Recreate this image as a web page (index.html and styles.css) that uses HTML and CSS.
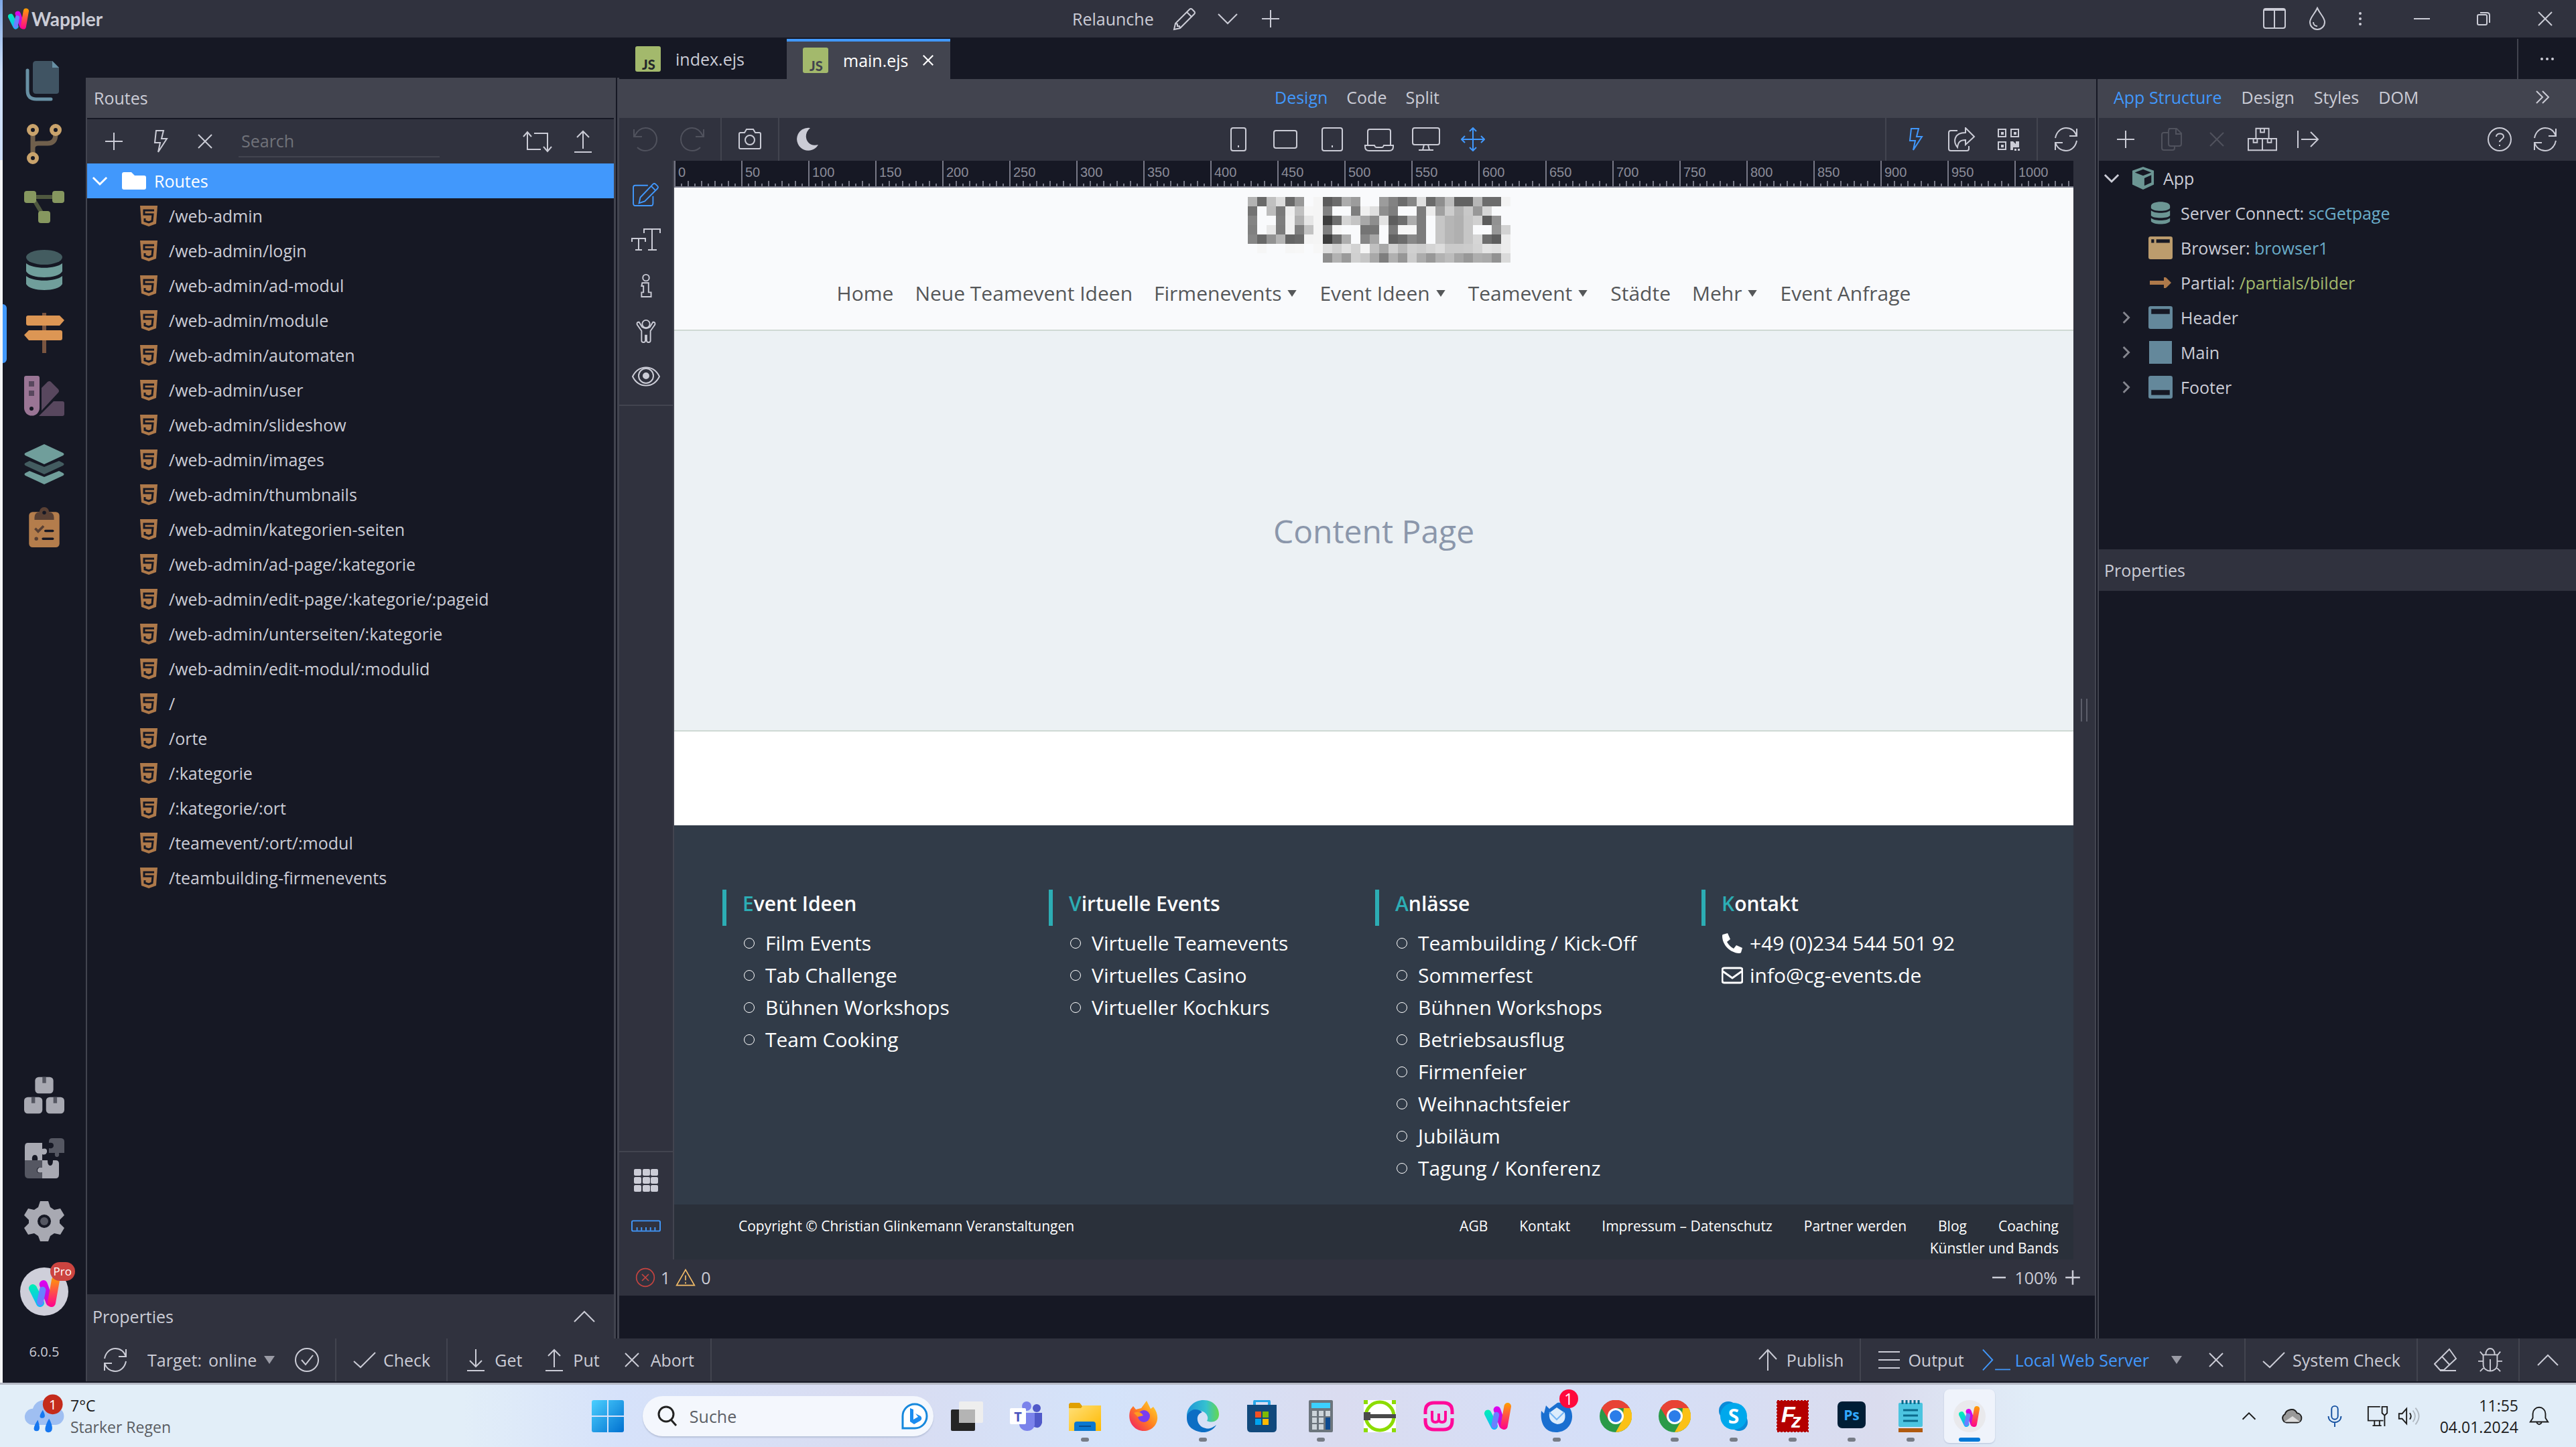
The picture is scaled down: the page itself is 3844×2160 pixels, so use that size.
FILE: index.html
```html
<!DOCTYPE html>
<html lang="de">
<head>
    <meta charset="UTF-8">
    <meta name="viewport" content="width=device-width, initial-scale=1.0">
    <title>Wappler</title>
    <link rel="stylesheet" href="styles.css">
</head>
<body>
    <svg class="sprite" aria-hidden="true">
        <defs>
            <linearGradient id="g-cyan" x1="0" y1="10" x2="0" y2="38" gradientUnits="userSpaceOnUse"><stop offset="0" stop-color="#00f0b4"/><stop offset="1" stop-color="#12b4ff"/></linearGradient>
            <linearGradient id="g-purple" x1="0" y1="5" x2="0" y2="38" gradientUnits="userSpaceOnUse"><stop offset="0" stop-color="#e000f0"/><stop offset=".5" stop-color="#c010e0"/><stop offset="1" stop-color="#f000b0"/></linearGradient>
            <linearGradient id="g-orange" x1="0" y1="0" x2="0" y2="38" gradientUnits="userSpaceOnUse"><stop offset="0" stop-color="#ffa000"/><stop offset="1" stop-color="#ff0090"/></linearGradient>
            <linearGradient id="g-win" x1="0" y1="0" x2="1" y2="1"><stop offset="0" stop-color="#4cd0ff"/><stop offset="1" stop-color="#0070d0"/></linearGradient>
            <linearGradient id="g-edge" x1="0" y1="0" x2="1" y2="0"><stop offset="0" stop-color="#1f95d8"/><stop offset=".6" stop-color="#35c1d0"/><stop offset="1" stop-color="#65d850"/></linearGradient>
            <linearGradient id="g-fox" x1="1" y1="0" x2="0" y2="1"><stop offset="0" stop-color="#ffe030"/><stop offset=".5" stop-color="#ff8020"/><stop offset="1" stop-color="#f01070"/></linearGradient>
            <linearGradient id="g-folder" x1="0" y1="0" x2="1" y2="1"><stop offset="0" stop-color="#ffe07a"/><stop offset="1" stop-color="#ffb900"/></linearGradient>
        </defs>
        <symbol id="wlogo" viewBox="0 0 38 38"><g fill="none" stroke-linecap="round" stroke-width="10"><path d="M5 15l9 18" stroke="url(#g-cyan)"/><path d="M18 10l8 22" stroke="url(#g-purple)"/><path d="M17 17l-3 15" stroke="#6a80ff" stroke-width="8"/><path d="M33 5l-5 28" stroke="url(#g-orange)"/></g></symbol>
        <symbol id="plus" viewBox="0 0 36 36"><path d="M18 5v26M5 18h26"/></symbol>
        <symbol id="minus" viewBox="0 0 36 36"><path d="M6 18h24"/></symbol>
        <symbol id="x" viewBox="0 0 36 36"><path d="M8 8l20 20M28 8L8 28"/></symbol>
        <symbol id="bolt" viewBox="0 0 36 36"><path d="M13 2h11l-3 12h8L16 34l3-14h-8z"/></symbol>
        <symbol id="swap" viewBox="0 0 44 36"><path d="M7 31V4M1 11l6-7 6 7M7 30h20M17 6h20v27M31 26l6 7 6-7" /></symbol>
        <symbol id="upload" viewBox="0 0 36 36"><path d="M18 29V3M9 12l9-9 9 9M5 34h26"/></symbol>
        <symbol id="download" viewBox="0 0 36 36"><path d="M18 2v26M9 19l9 9 9-9M5 34h26"/></symbol>
        <symbol id="arrow-up" viewBox="0 0 36 36"><path d="M18 34V3M5 17L18 3l13 14"/></symbol>
        <symbol id="down" viewBox="0 0 36 36"><path d="M4 11l14 14 14-14"/></symbol>
        <symbol id="up" viewBox="0 0 36 36"><path d="M3 26l15-15 15 15"/></symbol>
        <symbol id="right" viewBox="0 0 36 36"><path d="M12 7l11 11-11 11"/></symbol>
        <symbol id="double-right" viewBox="0 0 36 36"><path d="M9 9l9 9-9 9M18 9l9 9-9 9"/></symbol>
        <symbol id="pencil" viewBox="0 0 36 36"><path d="M4 25L25 4q2-2 4 0l3 3q2 2 0 4L11 32l-9 2zM21 8l7 7M4 25l3 1 0 3 3 0 1 3"/></symbol>
        <symbol id="layout" viewBox="0 0 36 36"><rect x="2" y="3" width="32" height="29" rx="3"/><path d="M3 5h30M18 4v28"/></symbol>
        <symbol id="drop" viewBox="0 0 36 36"><path d="M18 2c4 9 11 14 11 21a11 11 0 0 1-22 0C7 16 14 11 18 2zM12 23c0 4 3 6 6 6"/></symbol>
        <symbol id="dots-v" viewBox="0 0 36 36"><g fill="currentColor" stroke="none"><circle cx="18" cy="10" r="2"/><circle cx="18" cy="18" r="2"/><circle cx="18" cy="26" r="2"/></g></symbol>
        <symbol id="dots" viewBox="0 0 36 36"><g fill="currentColor" stroke="none"><circle cx="10" cy="18" r="2"/><circle cx="18" cy="18" r="2"/><circle cx="26" cy="18" r="2"/></g></symbol>
        <symbol id="restore" viewBox="0 0 36 36"><rect x="9" y="12" width="14" height="15" rx="2"/><path d="M13 9h10q4 0 4 4v11"/></symbol>
        <symbol id="undo" viewBox="0 0 36 36"><path d="M1 3v11h12M2 13C6 5 12 1 18 1c10 0 17 8 17 17s-7 17-17 17c-5 0-9-2-12-5"/></symbol>
        <symbol id="redo" viewBox="0 0 36 36"><path d="M35 3v11H23M34 13C30 5 24 1 18 1 8 1 1 9 1 18s7 17 17 17c5 0 9-2 12-5"/></symbol>
        <symbol id="camera" viewBox="0 0 36 36"><path d="M4 8h6l3-5h10l3 5h6q2 0 2 2v20q0 2-2 2H4q-2 0-2-2V10q0-2 2-2z"/><circle cx="18" cy="19" r="7"/></symbol>
        <symbol id="moon" viewBox="0 0 36 36"><path d="M22 1A17 17 0 1 0 34 26C18 31 9 12 22 1z" fill="currentColor" stroke="none"/></symbol>
        <symbol id="phone" viewBox="0 0 36 36"><rect x="7" y="1" width="22" height="34" rx="3"/><path d="M18 27v3"/></symbol>
        <symbol id="square" viewBox="0 0 36 36"><rect x="1" y="5" width="34" height="26" rx="3"/></symbol>
        <symbol id="tablet" viewBox="0 0 36 36"><rect x="3" y="1" width="30" height="34" rx="3"/><path d="M18 27v3"/></symbol>
        <symbol id="laptop" viewBox="0 0 44 36"><path d="M5 26V6q0-3 3-3h28q3 0 3 3v20M1 27h14q1 3 3 3h8q2 0 3-3h14v2q0 6-6 6H7q-6 0-6-6z"/></symbol>
        <symbol id="monitor" viewBox="0 0 42 36"><rect x="1" y="1" width="40" height="25" rx="3"/><path d="M18 26l-2 8M24 26l2 8M10 34h22"/></symbol>
        <symbol id="move" viewBox="0 0 36 36"><path d="M18 1v34M1 18h34M13 6l5-5 5 5M13 30l5 5 5-5M6 13l-5 5 5 5M30 13l5 5-5 5"/></symbol>
        <symbol id="share" viewBox="0 0 40 36"><path d="M14 5H4Q1 5 1 8v24q0 3 3 3h24q3 0 3-3v-4M26 1l13 13-13 12v-7c-8 0-11 3-12 11-7-9-5-22 12-22z"/></symbol>
        <symbol id="qr" viewBox="0 0 36 36"><path d="M3 3h11v11H3zM22 3h11v11H22zM3 22h11v11H3z"/><path d="M7 7h4v4H7zM26 7h4v4h-4zM7 26h4v4H7zM21 21h4l4 4v-4h5v9H25v4h-4zM27 32h3v3h-3zM32 32h3v3h-3z" fill="currentColor" stroke="none"/></symbol>
        <symbol id="refresh" viewBox="0 0 36 36"><path d="M34 2v11H23M2 34V23h11M2 16C4 6 11 1 18 1c7 0 13 4 16 12M34 20c-2 10-9 15-16 15-7 0-13-4-16-12"/></symbol>
        <symbol id="copy" viewBox="0 0 36 36"><path d="M14 2h12l7 7v16q0 3-3 3H17q-3 0-3-3V5q0-3 3-3M25 2v8h8M13 8H7q-3 0-3 3v20q0 3 3 3h13q3 0 3-3v-2"/></symbol>
        <symbol id="boxes" viewBox="0 0 46 36"><path d="M13 17V1h20v16M1 17h44v18H1zM23 17v18M20 1v6h6V1M9 17v6h6v-6M31 17v6h6v-6"/></symbol>
        <symbol id="from-bar" viewBox="0 0 36 36"><path d="M3 5v26M8 18h25M22 7l11 11-11 11"/></symbol>
        <symbol id="help" viewBox="0 0 36 36"><circle cx="18" cy="18" r="17"/><path d="M13 14c0-6 11-6 11 0 0 4-6 4-6 8M18 26v2"/></symbol>
        <symbol id="edit" viewBox="0 0 42 38"><path d="M24 5H4Q1 5 1 8v25q0 4 3 4h25q3 0 3-4V22M12 24L32 3q2-2 4 0l3 3q2 2 0 4L19 30l-9 3zM29 6l7 7"/></symbol>
        <symbol id="text" viewBox="0 0 44 36"><path d="M19 8V2h24v6M31 2v31M25 33h13M1 21v-5h20v5M11 16v17M6 33h10"/></symbol>
        <symbol id="info" viewBox="0 0 36 38"><circle cx="18" cy="7" r="5"/><path d="M12 15h10v15h4v7H11v-7h3V20h-3z"/></symbol>
        <symbol id="person" viewBox="0 0 36 38"><circle cx="18" cy="8" r="6"/><path d="M7 5q-4 0-3 4l7 10v15q0 3 3 3t3-3v-8h2v8q0 3 3 3t3-3V19l7-10q1-4-3-4l-5 8q-6 4-12 0z"/></symbol>
        <symbol id="eye" viewBox="0 0 42 36"><path d="M1 18C10 0 32 0 41 18 32 36 10 36 1 18z"/><circle cx="21" cy="17" r="11"/><circle cx="21" cy="17" r="4" fill="currentColor"/></symbol>
        <symbol id="grid" viewBox="0 0 36 36"><g fill="currentColor" stroke="none"><rect width="11" height="10" rx="2" y="1"/><rect width="11" height="10" rx="2" x="13" y="1"/><rect width="11" height="10" rx="2" x="25" y="1"/><rect width="11" height="10" rx="2" y="13"/><rect width="11" height="10" rx="2" x="13" y="13"/><rect width="11" height="10" rx="2" x="25" y="13"/><rect width="11" height="10" rx="2" y="25"/><rect width="11" height="10" rx="2" x="13" y="25"/><rect width="11" height="10" rx="2" x="25" y="25"/></g></symbol>
        <symbol id="ruler-icon" viewBox="0 0 46 36"><rect x="1" y="10" width="44" height="16" rx="2"/><path d="M9 20v5M16 20v5M23 20v5M30 20v5M37 20v5"/></symbol>
        <symbol id="circle-x" viewBox="0 0 36 36"><circle cx="18" cy="18" r="16"/><path d="M12 12l12 12M24 12L12 24"/></symbol>
        <symbol id="warn" viewBox="0 0 36 36"><path d="M18 4l16 28H2zM18 14v9M18 26v3"/></symbol>
        <symbol id="circle-check" viewBox="0 0 36 36"><circle cx="18" cy="18" r="17"/><path d="M10 18l6 7 11-14"/></symbol>
        <symbol id="check" viewBox="0 0 36 36"><path d="M2 20l10 9L34 7"/></symbol>
        <symbol id="list" viewBox="0 0 36 36"><path d="M2 6h32M2 18h32M2 30h32"/></symbol>
        <symbol id="terminal" viewBox="0 0 46 36"><path d="M2 2l15 16L2 34M21 33h24"/></symbol>
        <symbol id="eraser" viewBox="0 0 36 36"><path d="M23 2l10 14-18 17H9L1 24zM12 13l12 13M9 34h24"/></symbol>
        <symbol id="bug" viewBox="0 0 38 38"><path d="M12 10c0-12 14-12 14 0M8 11h22v15c0 14-22 14-22 0zM19 18v18M3 6l5 6M35 6l-5 6M0 21h8M30 21h8M3 37l6-6M35 37l-6-6"/></symbol>
        <symbol id="caret" viewBox="0 0 16 12"><path d="M0 0h16L8 12z" fill="currentColor" stroke="none"/></symbol>
        <symbol id="html5" viewBox="0 0 26 31"><path d="M0 0h26l-2 27-11 4-11-4z" fill="#ae794a"/><path d="M21 7H6v6h13l-1 10-5 2-6-2v-4" fill="none" stroke="#161824" stroke-width="3"/></symbol>
        <symbol id="folder" viewBox="0 0 36 28"><path d="M3 1h11l5 5h14q3 0 3 3v15q0 3-3 3H3q-3 0-3-3V4q0-3 3-3z" fill="#fff"/></symbol>
        <symbol id="cube" viewBox="0 0 36 36"><path fill-rule="evenodd" fill="#6c9694" d="M18 0l17 6v22l-17 8L1 28V6zM18 4L5 9l13 5 13-5zM20 18v12l11-5V13z"/></symbol>
        <symbol id="db" viewBox="0 0 30 36"><path fill="#6c9694" d="M0 7C0-2 30-2 30 7v3c-2 6-28 6-30 0zM0 14c6 5 24 5 30 0v8c-3 5-27 5-30 0zM0 26c6 5 24 5 30 0v5c-3 6-27 6-30 0z"/></symbol>
        <symbol id="window" viewBox="0 0 34 32"><rect width="34" height="32" rx="3" fill="#bc9c6d"/><path d="M4 4h4v5H4zM11 4h19v5H11z" fill="#161824"/></symbol>
        <symbol id="partial" viewBox="0 0 32 16"><path d="M0 5h21V0q2-1 4 1l7 7-7 7q-2 2-4 1v-5H0z" fill="#ae794a"/></symbol>
        <symbol id="el-header" viewBox="0 0 34 32"><rect width="34" height="32" rx="3" fill="#64889b"/><path d="M4 4h26v7H4z" fill="#161824"/></symbol>
        <symbol id="el-main" viewBox="0 0 34 34"><rect width="34" height="34" fill="#64889b"/></symbol>
        <symbol id="el-footer" viewBox="0 0 34 32"><rect width="34" height="32" rx="3" fill="#64889b"/><path d="M4 20h26v7H4z" fill="#161824"/></symbol>
        <symbol id="chrome" viewBox="0 0 48 48"><circle cx="24" cy="24" r="24" fill="#2a9a48"/><path d="M3 12a24 24 0 0 1 42 0H24L14 30z" fill="#e84335"/><path d="M45 12a24 24 0 0 1-21 36l10-18 2-18z" fill="#fbc116"/><circle cx="24" cy="24" r="12" fill="#fff"/><circle cx="24" cy="24" r="9" fill="#2b7de9"/></symbol>
    </svg>

    <div class="window">
        <header class="titlebar">
            <div class="brand"><svg class="brand-logo"><use href="#wlogo"/></svg>Wappler</div>
            <div class="project">
                <span>Relaunche</span>
                <button aria-label="Edit project"><svg class="icon"><use href="#pencil"/></svg></button>
                <button aria-label="Projects"><svg class="icon"><use href="#down"/></svg></button>
                <button aria-label="New project"><svg class="icon"><use href="#plus"/></svg></button>
            </div>
            <div class="window-buttons">
                <button aria-label="Layout"><svg class="icon"><use href="#layout"/></svg></button>
                <button aria-label="Theme"><svg class="icon"><use href="#drop"/></svg></button>
                <button aria-label="Menu"><svg class="icon"><use href="#dots-v"/></svg></button>
                <div class="system">
                    <button aria-label="Minimize"><svg class="icon"><use href="#minus"/></svg></button>
                    <button aria-label="Restore"><svg class="icon"><use href="#restore"/></svg></button>
                    <button aria-label="Close"><svg class="icon"><use href="#x"/></svg></button>
                </div>
            </div>
        </header>

        <nav class="rail">
            <button aria-label="Pages"><svg viewBox="0 0 60 60"><path d="M18 0h24l10 10v35q0 4-4 4H18q-5 0-5-5V5q0-5 5-5z" fill="#405463"/><path d="M42 0l10 10H42z" fill="#6890a4"/><path d="M5 14v30q0 13 13 13h22" fill="none" stroke="#6890a4" stroke-width="5" stroke-linecap="round"/></svg></button>
            <button aria-label="Git"><svg viewBox="0 0 60 60" fill="none"><path d="M13 12v36M13 36q0-7 8-7h14q12 0 12-14" stroke="#705f4c" stroke-width="7"/><g stroke="#c9a36c" stroke-width="6"><circle cx="13" cy="9" r="6"/><circle cx="47" cy="9" r="6"/><circle cx="13" cy="51" r="6"/></g></svg></button>
            <button aria-label="Workflows"><svg viewBox="0 0 60 60"><path d="M12 15h36M12 15l18 30" stroke="#4f583f" stroke-width="6"/><g fill="#86975f"><rect x="0" y="6" width="18" height="18" rx="4"/><rect x="42" y="6" width="18" height="18" rx="4"/><rect x="21" y="36" width="18" height="18" rx="4"/></g></svg></button>
            <button aria-label="Database"><svg viewBox="0 0 60 60"><ellipse cx="30" cy="11" rx="27" ry="11" fill="#435c60"/><path d="M3 20c10 9 44 9 54 0v12c-6 12-48 12-54 0zM3 39c10 9 44 9 54 0v12c-6 12-48 12-54 0z" fill="#709e9b"/></svg></button>
            <button class="active" aria-label="Routes"><svg viewBox="0 0 60 60"><path d="M27 0h6v60h-6z" fill="#7a5540"/><path d="M6 4h47l7 7-7 8H6q-3 0-3-3V7q0-3 3-3zM54 26H7l-7 7 7 8h47q3 0 3-3v-9q0-3-3-3z" fill="#dc9654"/></svg></button>
            <button aria-label="Styles"><svg viewBox="0 0 60 60"><path d="M26 52V18l9-9q3-2 5 0l11 11q2 3 0 5zM22 60l22-22h13q3 0 3 3v16q0 3-3 3z" fill="#58475e"/><path d="M3 0h17q3 0 3 3v45a11 11 0 0 1-23 0V3q0-3 3-3z" fill="#9a7595"/><path d="M7 8h8v8H7zM7 22h8v8H7z" fill="#58475e"/><circle cx="11" cy="49" r="3" fill="#161824"/></svg></button>
            <button class="group-start" aria-label="Layers"><svg viewBox="0 0 60 60"><path d="M30 0l28 13q3 2 0 4L30 30 2 17q-3-2 0-4zM8 40l22 9 22-9 6 3q3 2 0 4L30 60 2 47q-3-2 0-4z" fill="#709e9b"/><path d="M8 25l22 9 22-9 6 3q3 2 0 4L30 45 2 32q-3-2 0-4z" fill="#435c60"/></svg></button>
            <button aria-label="Tasks"><svg viewBox="0 0 60 66"><rect x="5" y="8" width="50" height="58" rx="6" fill="#b47d4c"/><path d="M14 21v-4q0-8 8-9a8 8 0 0 1 16 0q8 1 8 9v4z" fill="#594034"/><circle cx="30" cy="9" r="3" fill="#161824"/><path d="M15 35l5 5 9-9" fill="none" stroke="#594034" stroke-width="4"/><circle cx="17" cy="52" r="3" fill="#594034"/><path d="M32 39h12M28 52h16" stroke="#161824" stroke-width="4" stroke-linecap="round"/></svg></button>
            <span class="spacer"></span>
            <button aria-label="Extensions"><svg viewBox="0 0 66 60"><g fill="#a8a9b2"><rect x="18" width="30" height="27" rx="6"/><rect y="33" width="30" height="27" rx="6"/><rect x="36" y="33" width="30" height="27" rx="6"/></g><path d="M30 0h6v10h-6zM12 33h6v10h-6zM48 33h6v10h-6z" fill="#555762"/></svg></button>
            <button aria-label="Plugins"><svg viewBox="0 0 60 60"><path d="M5 7h22v9q8-2 7 5-2 5-7 3v9h-7q1-8-4-8t-4 8H1V13q0-6 4-6zM27 33h8q0 8 4 8t4-8h4q5 0 5 5v16q0 6-5 6H27v-9q-8 2-7-4 2-5 7-3z" fill="#a8a9b2"/><path d="M1 33h26v11q-8-2-8 4t8 3v9H7q-6 0-6-6zM42 0h12q6 0 6 5v17h-8q1 6-3 6t-3-6h-9v-7q7 1 7-4t-7-4V5q0-5 5-5z" fill="#555762"/></svg></button>
            <button aria-label="Settings"><svg viewBox="0 0 60 60"><path fill="#a8a9b2" fill-rule="evenodd" d="M24 0h12l3 9 6 4 9-2 6 10-7 7v5l7 7-6 10-9-2-6 4-3 8H24l-3-8-6-4-9 2-6-10 7-7v-5l-7-7 6-10 9 2 6-4zM30 20a10 10 0 1 0 0 20 10 10 0 0 0 0-20z"/><circle cx="30" cy="30" r="6" fill="#555762"/></svg></button>
            <button class="account" aria-label="Account"><svg><use href="#wlogo"/></svg><span class="pro">Pro</span></button>
            <span class="version">6.0.5</span>
        </nav>

        <aside class="left-panel">
            <h2 class="panel-head">Routes</h2>
            <div class="toolbar">
                <button aria-label="Add"><svg class="icon"><use href="#plus"/></svg></button>
                <button aria-label="Actions"><svg class="icon"><use href="#bolt"/></svg></button>
                <button aria-label="Delete"><svg class="icon"><use href="#x"/></svg></button>
                <input class="route-search" type="text" placeholder="Search" aria-label="Search">
                <span class="spacer"></span>
                <button aria-label="Sync"><svg class="icon wide-icon"><use href="#swap"/></svg></button>
                <button aria-label="Upload"><svg class="icon"><use href="#upload"/></svg></button>
            </div>
            <div class="tree-root"><svg class="icon small"><use href="#down"/></svg><svg class="folder"><use href="#folder"/></svg>Routes</div>
            <ul class="routes">
                <li><svg><use href="#html5"/></svg>/web-admin</li>
                <li><svg><use href="#html5"/></svg>/web-admin/login</li>
                <li><svg><use href="#html5"/></svg>/web-admin/ad-modul</li>
                <li><svg><use href="#html5"/></svg>/web-admin/module</li>
                <li><svg><use href="#html5"/></svg>/web-admin/automaten</li>
                <li><svg><use href="#html5"/></svg>/web-admin/user</li>
                <li><svg><use href="#html5"/></svg>/web-admin/slideshow</li>
                <li><svg><use href="#html5"/></svg>/web-admin/images</li>
                <li><svg><use href="#html5"/></svg>/web-admin/thumbnails</li>
                <li><svg><use href="#html5"/></svg>/web-admin/kategorien-seiten</li>
                <li><svg><use href="#html5"/></svg>/web-admin/ad-page/:kategorie</li>
                <li><svg><use href="#html5"/></svg>/web-admin/edit-page/:kategorie/:pageid</li>
                <li><svg><use href="#html5"/></svg>/web-admin/unterseiten/:kategorie</li>
                <li><svg><use href="#html5"/></svg>/web-admin/edit-modul/:modulid</li>
                <li><svg><use href="#html5"/></svg>/</li>
                <li><svg><use href="#html5"/></svg>/orte</li>
                <li><svg><use href="#html5"/></svg>/:kategorie</li>
                <li><svg><use href="#html5"/></svg>/:kategorie/:ort</li>
                <li><svg><use href="#html5"/></svg>/teamevent/:ort/:modul</li>
                <li><svg><use href="#html5"/></svg>/teambuilding-firmenevents</li>
            </ul>
            <div class="left-props"><h2>Properties</h2><button aria-label="Expand"><svg class="icon"><use href="#up"/></svg></button></div>
        </aside>

        <div class="tabs">
            <button class="tab"><svg viewBox="0 0 38 38"><rect width="38" height="38" rx="3" fill="#a3b96c"/><text x="10" y="35" font-family="Lato" font-weight="900" font-size="20" fill="#23262b">JS</text></svg>index.ejs</button>
            <button class="tab active"><svg viewBox="0 0 38 38"><rect width="38" height="38" rx="3" fill="#a3b96c"/><text x="10" y="35" font-family="Lato" font-weight="900" font-size="20" fill="#42444f">JS</text></svg>main.ejs<svg class="close icon"><use href="#x"/></svg></button>
            <span class="spacer"></span>
            <button class="tab-more" aria-label="More"><svg class="icon"><use href="#dots"/></svg></button>
        </div>

        <main class="editor">
            <div class="modes"><button class="active">Design</button><button>Code</button><button>Split</button></div>
            <div class="toolbar design-bar">
                <div class="group left">
                    <button class="off" aria-label="Undo"><svg class="icon"><use href="#undo"/></svg></button>
                    <button class="off" aria-label="Redo"><svg class="icon"><use href="#redo"/></svg></button>
                    <span class="sep"></span>
                    <button aria-label="Screenshot"><svg class="icon"><use href="#camera"/></svg></button>
                    <span class="sep"></span>
                    <button aria-label="Dark mode"><svg class="icon"><use href="#moon"/></svg></button>
                </div>
                <div class="group">
                    <button aria-label="Phone"><svg class="icon"><use href="#phone"/></svg></button>
                    <button aria-label="Phone landscape"><svg class="icon"><use href="#square"/></svg></button>
                    <button aria-label="Tablet"><svg class="icon"><use href="#tablet"/></svg></button>
                    <button aria-label="Laptop"><svg class="icon wide-icon"><use href="#laptop"/></svg></button>
                    <button aria-label="Desktop"><svg class="icon wide-icon"><use href="#monitor"/></svg></button>
                    <button class="on" aria-label="Responsive"><svg class="icon"><use href="#move"/></svg></button>
                </div>
                <div class="group end">
                    <span class="sep"></span>
                    <button class="on" aria-label="Live"><svg class="icon"><use href="#bolt"/></svg></button>
                    <button aria-label="Open in browser"><svg class="icon wide-icon"><use href="#share"/></svg></button>
                    <button aria-label="QR code"><svg class="icon"><use href="#qr"/></svg></button>
                    <span class="sep"></span>
                    <button aria-label="Reload"><svg class="icon"><use href="#refresh"/></svg></button>
                </div>
            </div>
            <div class="stage">
                <div class="side-tools">
                    <button class="on" aria-label="Edit"><svg class="icon wide-icon"><use href="#edit"/></svg></button>
                    <button aria-label="Text"><svg class="icon wide-icon"><use href="#text"/></svg></button>
                    <button aria-label="Info"><svg class="icon"><use href="#info"/></svg></button>
                    <button aria-label="Accessibility"><svg class="icon"><use href="#person"/></svg></button>
                    <button aria-label="Visibility"><svg class="icon wide-icon"><use href="#eye"/></svg></button>
                    <hr>
                    <span class="spacer"></span>
                    <hr>
                    <button aria-label="Grid"><svg class="icon"><use href="#grid"/></svg></button>
                    <button class="on" aria-label="Ruler"><svg class="icon wide-icon"><use href="#ruler-icon"/></svg></button>
                </div>
                <div class="canvas">
                    <div class="ruler" id="ruler"></div>
                    <div class="site">
                        <header class="site-header">
                            <svg class="site-logo" id="site-logo" viewBox="0 0 28 7" shape-rendering="crispEdges"></svg>
                            <nav class="site-nav">
                                <a href="#">Home</a>
                                <a href="#">Neue Teamevent Ideen</a>
                                <a href="#">Firmenevents<svg><use href="#caret"/></svg></a>
                                <a href="#">Event Ideen<svg><use href="#caret"/></svg></a>
                                <a href="#">Teamevent<svg><use href="#caret"/></svg></a>
                                <a href="#">Städte</a>
                                <a href="#">Mehr<svg><use href="#caret"/></svg></a>
                                <a href="#">Event Anfrage</a>
                            </nav>
                        </header>
                        <section class="content-page">Content Page</section>
                        <div class="site-gap"></div>
                        <footer class="site-footer">
                            <div><h3>Event Ideen</h3>
                                <ul><li>Film Events</li><li>Tab Challenge</li><li>Bühnen Workshops</li><li>Team Cooking</li></ul></div>
                            <div><h3>Virtuelle Events</h3>
                                <ul><li>Virtuelle Teamevents</li><li>Virtuelles Casino</li><li>Virtueller Kochkurs</li></ul></div>
                            <div><h3>Anlässe</h3>
                                <ul><li>Teambuilding / Kick-Off</li><li>Sommerfest</li><li>Bühnen Workshops</li><li>Betriebsausflug</li><li>Firmenfeier</li><li>Weihnachtsfeier</li><li>Jubiläum</li><li>Tagung / Konferenz</li></ul></div>
                            <div><h3>Kontakt</h3>
                                <p><svg viewBox="0 0 32 32"><path d="M2 3l7-2 4 9-5 4q4 7 10 10l4-5 9 4-2 7q-1 1-3 1C12 30 1 18 1 5q0-2 1-2z" fill="#fff"/></svg>+49 (0)234 544 501 92</p>
                                <p><svg viewBox="0 0 32 32"><path d="M4 5h24q3 0 3 3v16q0 3-3 3H4q-3 0-3-3V8q0-3 3-3zM2 10l14 10 14-10" fill="none" stroke="#fff" stroke-width="3"/></svg>info@cg-events.de</p></div>
                        </footer>
                        <div class="site-copy">
                            <span>Copyright © Christian Glinkemann Veranstaltungen</span>
                            <nav><a href="#">AGB</a><a href="#">Kontakt</a><a href="#">Impressum – Datenschutz</a><a href="#">Partner werden</a><a href="#">Blog</a><a href="#">Coaching</a><a href="#">Künstler und Bands</a></nav>
                        </div>
                    </div>
                </div>
                <div class="grip"><i></i></div>
            </div>
            <div class="status">
                <svg class="icon status-icon error"><use href="#circle-x"/></svg>1
                <svg class="icon status-icon warning"><use href="#warn"/></svg>0
                <span class="spacer"></span>
                <button aria-label="Zoom out"><svg class="icon zoom"><use href="#minus"/></svg></button>
                <span>100%</span>
                <button aria-label="Zoom in"><svg class="icon zoom"><use href="#plus"/></svg></button>
            </div>
            <div class="below"></div>
        </main>

        <aside class="right-panel">
            <div class="side-tabs">
                <button class="active">App Structure</button><button>Design</button><button>Styles</button><button>DOM</button>
                <span class="spacer"></span>
                <button aria-label="More tabs"><svg class="icon"><use href="#double-right"/></svg></button>
            </div>
            <div class="toolbar">
                <button aria-label="Add"><svg class="icon"><use href="#plus"/></svg></button>
                <button class="off" aria-label="Copy"><svg class="icon"><use href="#copy"/></svg></button>
                <button class="off" aria-label="Delete"><svg class="icon"><use href="#x"/></svg></button>
                <button aria-label="Components"><svg class="icon wide-icon"><use href="#boxes"/></svg></button>
                <button aria-label="Expand"><svg class="icon"><use href="#from-bar"/></svg></button>
                <span class="spacer"></span>
                <button aria-label="Help"><svg class="icon"><use href="#help"/></svg></button>
                <button aria-label="Refresh"><svg class="icon"><use href="#refresh"/></svg></button>
            </div>
            <div class="app-tree">
                <div class="app-root"><svg class="icon small"><use href="#down"/></svg><svg class="node"><use href="#cube"/></svg>App</div>
                <ul>
                    <li><i></i><svg class="node"><use href="#db"/></svg><span>Server Connect: <b class="blue">scGetpage</b></span></li>
                    <li><i></i><svg class="node"><use href="#window"/></svg><span>Browser: <b class="blue">browser1</b></span></li>
                    <li><i></i><svg class="node arrow"><use href="#partial"/></svg><span>Partial: <b class="green">/partials/bilder</b></span></li>
                    <li><svg class="icon small dim"><use href="#right"/></svg><svg class="node"><use href="#el-header"/></svg>Header</li>
                    <li><svg class="icon small dim"><use href="#right"/></svg><svg class="node"><use href="#el-main"/></svg>Main</li>
                    <li><svg class="icon small dim"><use href="#right"/></svg><svg class="node"><use href="#el-footer"/></svg>Footer</li>
                </ul>
            </div>
            <h2 class="right-props">Properties</h2>
        </aside>

        <div class="bottombar">
            <div class="bb-group">
                <button aria-label="Refresh targets"><svg class="icon"><use href="#refresh"/></svg></button>
                <span class="target"><label for="target">Target:</label><select id="target"><option>online</option></select><svg class="drop-caret"><use href="#caret"/></svg></span>
                <button aria-label="Target status"><svg class="icon"><use href="#circle-check"/></svg></button>
            </div>
            <div class="bb-group"><button><svg class="icon"><use href="#check"/></svg>Check</button></div>
            <div class="bb-group">
                <button><svg class="icon"><use href="#download"/></svg>Get</button>
                <button><svg class="icon"><use href="#upload"/></svg>Put</button>
                <button><svg class="icon"><use href="#x"/></svg>Abort</button>
            </div>
            <span class="spacer"></span>
            <div class="bb-group"><button><svg class="icon"><use href="#arrow-up"/></svg>Publish</button></div>
            <div class="bb-group">
                <button><svg class="icon"><use href="#list"/></svg>Output</button>
                <button class="on"><svg class="icon wide-icon"><use href="#terminal"/></svg>Local Web Server</button>
                <button class="server-menu" aria-label="Server menu"><svg class="drop-caret"><use href="#caret"/></svg></button>
                <button aria-label="Stop"><svg class="icon"><use href="#x"/></svg></button>
            </div>
            <div class="bb-group"><button><svg class="icon"><use href="#check"/></svg>System Check</button></div>
            <div class="bb-group">
                <button aria-label="Clear"><svg class="icon"><use href="#eraser"/></svg></button>
                <button aria-label="Debug"><svg class="icon"><use href="#bug"/></svg></button>
            </div>
            <div class="bb-group last"><button aria-label="Expand output"><svg class="icon"><use href="#up"/></svg></button></div>
        </div>
    </div>

    <footer class="taskbar">
        <div class="weather">
            <svg viewBox="0 0 70 72"><path d="M14 50a13 13 0 0 1 0-26 19 19 0 0 1 36-2 14 14 0 0 1 0 28z" fill="#9fbff2"/><path d="M22 42c-8 12-8 18-2 18s6-6 2-18zM30 26c-6 9-6 13-1 13s6-4 1-13zM40 40c-8 14-8 22-1 22s9-8 1-22z" fill="#1677f0"/><circle cx="46" cy="17" r="16" fill="#c42b1c"/><text x="46" y="25" text-anchor="middle" font-family="Open Sans" font-size="22" fill="#fff">1</text></svg>
            <p>7°C<br><small>Starker Regen</small></p>
        </div>
        <div class="apps">
            <button aria-label="Start"><svg viewBox="0 0 48 48"><path d="M3 0h20v23H0V3q0-3 3-3zM25 0h20q3 0 3 3v20H25zM0 25h23v23H3q-3 0-3-3zM25 25h23v20q0 3-3 3H25z" fill="url(#g-win)"/></svg></button>
            <label class="task-search">
                <svg viewBox="0 0 32 32" fill="none" stroke="#222" stroke-width="3"><circle cx="15" cy="13" r="11"/><path d="M22 21l8 9"/></svg>
                <input type="text" placeholder="Suche" aria-label="Suche">
                <svg class="bing" viewBox="0 0 40 40"><path d="M2 38V20a18 18 0 1 1 18 18z" fill="#fff" stroke="#1688dc" stroke-width="3"/><path d="M13 8l5 2v15l7-4-4-5 8 4q3 4-1 7l-9 5-6-4z" fill="#1b8cf0"/></svg>
            </label>
            <button aria-label="Task view"><svg viewBox="0 0 48 48"><rect x="0" y="14" width="36" height="32" rx="2" fill="#252525"/><rect x="12" y="2" width="36" height="32" rx="2" fill="#eee"/><path d="M12 14h24v20H12z" fill="#b4b4b4"/></svg></button>
            <button aria-label="Teams"><svg viewBox="0 0 48 48"><circle cx="40" cy="12" r="6" fill="#5059c9"/><path d="M30 19h18v15q-3 10-12 6z" fill="#5059c9"/><circle cx="25" cy="9" r="7" fill="#7b83eb"/><path d="M14 19h23v18c-2 12-20 12-23 0z" fill="#7b83eb"/><rect y="12" width="24" height="24" rx="2" fill="#fff"/><text x="12" y="32" text-anchor="middle" font-family="Open Sans" font-weight="700" font-size="20" fill="#4b53bc">T</text></svg></button>
            <button class="run" aria-label="Explorer"><svg viewBox="0 0 48 48"><path d="M2 4h14l4 5v8H0V6z" fill="#e0a000"/><path d="M0 12h18l3-4h27v38H0z" fill="url(#g-folder)"/><path d="M8 46V36q0-4 4-4h24q4 0 4 4v10z" fill="#0a78d0"/><path d="M15 39h18" stroke="#084b8c" stroke-width="2"/></svg></button>
            <button aria-label="Firefox"><svg viewBox="0 0 48 48"><path d="M4 14l4-5 4 5 8-2 8-11 6 12 4-3c14 18 2 36-14 36C8 46-2 30 4 14z" fill="url(#g-fox)"/><circle cx="24" cy="24" r="9" fill="#7a3cf0"/><path d="M9 19q9-4 14 4l-8 2z" fill="#ff9a20"/></svg></button>
            <button class="run" aria-label="Edge"><svg viewBox="0 0 48 48"><path d="M0 28C-2 10 12 0 25 0c16 0 23 12 23 21 0 10-9 14-18 10 4-6-2-15-11-15C9 16 2 22 0 28z" fill="url(#g-edge)"/><path d="M0 27C0 15 14 10 23 18c-12 4-8 22 5 24 6 2 12-2 16-5-4 8-14 12-22 11C8 46 0 38 0 27z" fill="#0c6ec4"/></svg></button>
            <button aria-label="Store"><svg viewBox="0 0 48 48"><path d="M13 12V3q0-2 2-2h18q2 0 2 2v9" fill="none" stroke="#28a8ea" stroke-width="4"/><path d="M2 7h44v35q0 6-6 6H8q-6 0-6-6z" fill="#11497c"/><path d="M14 17h9v9h-9z" fill="#f25022"/><path d="M25 17h9v9h-9z" fill="#7fba00"/><path d="M14 28h9v9h-9z" fill="#00a4ef"/><path d="M25 28h9v9h-9z" fill="#ffb900"/></svg></button>
            <button class="run" aria-label="Calculator"><svg viewBox="0 0 48 48"><rect x="6" width="36" height="48" rx="2" fill="#6c757d"/><path d="M10 4h28v8H10z" fill="#3cd0ff"/><path d="M11 16h7v8h-7zM21 16h7v8h-7zM31 16h7v8h-7zM11 26h7v8h-7zM21 26h7v8h-7zM11 36h7v8h-7zM21 36h7v8h-7z" fill="#ccd4da"/><path d="M31 26h7v18h-7z" fill="#0c4a90"/></svg></button>
            <button aria-label="Remote"><svg viewBox="0 0 48 48"><rect width="48" height="48" fill="#fff"/><path d="M0 0h6v6H0zM42 0h6v6h-6zM0 42h6v6H0zM42 42h6v6h-6z" fill="#8cdc00"/><circle cx="24" cy="24" r="21" fill="none" stroke="#8cdc00" stroke-width="5"/><path d="M0 18h10v3h38v6H10v3H0z" fill="#4a4a4a"/></svg></button>
            <button aria-label="Wamp"><svg viewBox="0 0 48 48" fill="none" stroke="#ff0a9a"><path d="M4 21v-4Q4 4 17 4h14q13 0 13 13v4M4 27v4q0 13 13 13h14q13 0 13-13v-4" stroke-width="5"/><path d="M14 16v12q0 5 5 5t5-5v-8 8q0 5 5 5t5-5V16" stroke-width="4"/></svg></button>
            <button aria-label="Wappler"><svg class="inset"><use href="#wlogo"/></svg></button>
            <button class="run" aria-label="Thunderbird"><svg viewBox="0 0 48 48"><path d="M1 16l4 4 3-12 5 5 12-9c15-2 23 10 22 22-1 13-11 22-24 22C5 48-1 33 1 16z" fill="#1a6fd0"/><path d="M13 19l11-8 12 8q3 16-11 17-14-3-12-17z" fill="#dcecfc"/><path d="M13 18l11 11 11-11" fill="none" stroke="#74b4f4" stroke-width="2"/></svg><span class="badge">1</span></button>
            <button aria-label="Chrome"><svg><use href="#chrome"/></svg></button>
            <button class="run" aria-label="Chrome 2"><svg><use href="#chrome"/></svg></button>
            <button class="run" aria-label="Skype"><svg viewBox="0 0 48 48"><circle cx="16" cy="16" r="14" fill="#0a8ad8"/><circle cx="32" cy="33" r="13" fill="#0a8ad8"/><circle cx="24" cy="24" r="20" fill="#00a8ec"/><text x="24" y="35" text-anchor="middle" font-family="Open Sans" font-weight="700" font-size="30" fill="#fff">S</text></svg></button>
            <button class="run" aria-label="FileZilla"><svg viewBox="0 0 48 48"><rect x="1" y="1" width="46" height="46" fill="#b40000" stroke="#b40000" stroke-width="2" stroke-dasharray="3 2"/><text x="7" y="33" font-family="Liberation Sans" font-style="italic" font-weight="700" font-size="34" fill="#fff">F</text><text x="22" y="41" font-family="Liberation Sans" font-style="italic" font-weight="700" font-size="30" fill="#fff">z</text></svg></button>
            <button class="run" aria-label="Photoshop"><svg viewBox="0 0 48 48"><rect x="3" y="2" width="42" height="40" rx="7" fill="#001e36"/><text x="24" y="30" text-anchor="middle" font-family="Open Sans" font-weight="700" font-size="21" fill="#31a8ff">Ps</text></svg></button>
            <button class="run" aria-label="Notepad"><svg viewBox="0 0 48 48"><path d="M6 42h36v6H6z" fill="#b05a10"/><rect x="6" y="4" width="36" height="36" rx="2" fill="#4cc4e0"/><path d="M12 0v6M18 0v6M24 0v6M30 0v6M36 0v6M13 15h22M13 23h22M13 31h22" stroke="#0a6a8c" stroke-width="3"/></svg></button>
            <button class="current" aria-label="Wappler 2"><svg viewBox="0 0 48 48"><circle cx="24" cy="24" r="24" fill="#e9e9ec"/><use href="#wlogo" x="8" y="9" width="31" height="31"/></svg></button>
        </div>
        <div class="tray">
            <svg class="tray-icon" viewBox="0 0 36 36"><path d="M8 23l10-10 10 10"/></svg>
            <svg class="tray-icon" viewBox="0 0 36 36"><path d="M9 28a7 7 0 0 1-2-13c2-8 15-11 19-2 9 1 10 14 1 15z" fill="#999"/><path d="M6 27l13-9 12 9z" fill="#ddd" stroke="none"/></svg>
            <svg class="tray-icon mic" viewBox="0 0 36 36"><rect x="13" y="2" width="10" height="21" rx="5"/><path d="M8 18c0 13 20 13 20 0M18 28v7"/></svg>
            <svg class="tray-icon" viewBox="0 0 36 36"><path d="M22 3H3v22h24M10 33h14M13 25v8M21 25v8M25 3h8v10l-3 3h-2l-3-3zM29 16v18"/></svg>
            <svg class="tray-icon sound" viewBox="0 0 36 36"><path d="M3 14h5l7-8v24l-7-8H3zM20 13q4 5 0 10"/><path d="M25 9q7 9 0 18M29 5q11 13 0 26" stroke="#b0b8c0"/></svg>
            <p class="clock">11:55<br>04.01.2024</p>
            <svg class="tray-icon bell" viewBox="0 0 36 36"><path d="M4 27h28l-4-6v-7a10 10 0 0 0-20 0v7zM14 28q4 6 8 0"/></svg>
        </div>
    </footer>

    <script>
        // ruler labels, one every 50 units
        const ruler = document.getElementById("ruler");
        for (let i = 0; i <= 1000; i += 50) {
            const mark = document.createElement("span");
            mark.innerText = i;
            ruler.appendChild(mark);
        }

        // pixelated logo, one grey value per cell
        const logoRows = [
            "b369c0dc6998f8f55c6cac9cf9f99c826c86df6a8ebc6262b66c6cf3",
            "73f9bc7aeec0f6f582fafa7ef0df8e7efafa7ceca0ccb2c898d6fafa",
            "84fafa7ef0b0e6f53d6ed4c4a88ee25e6eac7cfac6b6b0c6d05c92fa",
            "80fae87cf07ec2f580f6fafa7476fa7af6f67cfac6b6b0c6faf896d2",
            "866892b4646af4f53d6eaefa86a6fa626c887cfac6b6b0c6d66e5eec",
            "faf6fafaf6f7faf7ddd0e0d2f4c0a8d0bad0ccd4dccacaccd4e4e0ec",
            "fafafafafafafafa8eb29ad0c6a87eb096ccac98b2bca698aeaa92da"
        ];
        let cells = "";
        logoRows.forEach((row, y) => {
            for (let x = 0; x < 28; x++) {
                const v = row.substr(x * 2, 2);
                if (v < "f8") {
                    cells += `<rect x="${x}" y="${y}" width="1" height="1" fill="#${v}${v}${v}"/>`;
                }
            }
        });
        document.getElementById("site-logo").innerHTML = cells;
    </script>
</body>
</html>
```
FILE: styles.css
```css
* {
    box-sizing: border-box;
}
body {
    margin: 0;
    min-height: 100vh;
    display: flex;
    flex-direction: column;
    font-family: "Open Sans", "Noto Sans", sans-serif;
    font-size: 25px;
    color: #cbccd6;
    background: #161824;
}
.sprite {
    display: block;
    width: 0;
    height: 0;
}
button, input, select {
    font: inherit;
    color: inherit;
    background: none;
    border: 0;
    padding: 0;
    margin: 0;
}
button {
    display: flex;
    align-items: center;
    justify-content: center;
    white-space: nowrap;
}
h2, h3, p, ul {
    margin: 0;
    padding: 0;
    font-weight: 400;
    font-size: inherit;
    list-style: none;
}
a {
    color: inherit;
    text-decoration: none;
}
.spacer {
    flex: 1;
}
.icon {
    width: 36px;
    height: 36px;
    flex: none;
    fill: none;
    stroke: currentColor;
    stroke-width: 2px;
}
.wide-icon {
    width: 44px;
    margin: 0 -4px;
}
.small {
    width: 26px;
    height: 26px;
    stroke-width: 4px;
}
.on, .active {
    color: #4198fc;
}
.off {
    color: #50525d;
}

/* window frame */
.window {
    flex: 1;
    display: grid;
    grid-template-columns: 124px 796px 1fr 718px;
    grid-template-rows: 56px 62px 1fr 66px;
    border-left: 4px solid;
    border-image: linear-gradient(#7ea8e6 0, #cfe0f8 110px, #cfe0f8 240px, #f4f5f6 240px) 1;
}
.titlebar {
    grid-column: 1 / -1;
    display: grid;
    grid-template-columns: 1596px auto 1fr;
    align-items: center;
    background: #30323e;
}
.brand {
    display: flex;
    align-items: center;
    gap: 4px;
    padding-left: 8px;
    font-family: Lato, sans-serif;
    font-weight: 700;
    font-size: 28px;
    line-height: 50px;
}
.brand-logo {
    width: 31px;
    height: 34px;
}
.project, .window-buttons, .system {
    display: flex;
    align-items: center;
}
.project span {
    margin-right: 14px;
}
.project button, .window-buttons button {
    width: 64px;
}
.window-buttons {
    justify-content: flex-end;
}
.system {
    margin-left: 14px;
}
.window-buttons .system button {
    width: 92px;
}

/* icon rail */
.rail {
    grid-row: 2 / -1;
    display: flex;
    flex-direction: column;
    align-items: center;
    padding-top: 18px;
}
.rail button {
    position: relative;
    width: 100%;
    height: 94px;
}
.rail .group-start {
    margin-top: 8px;
}
.rail svg {
    width: 60px;
    height: 60px;
}
.rail .active::before {
    content: "";
    position: absolute;
    left: 0;
    top: 4px;
    width: 6px;
    height: 88px;
    background: #4198fc;
    border-radius: 0 6px 6px 0;
}
.rail .account {
    width: 72px;
    height: 72px;
    margin-top: 22px;
    border-radius: 50%;
    background: #cfcfda;
}
.rail .account svg {
    width: 48px;
    height: 46px;
}
.pro {
    position: absolute;
    right: -10px;
    top: -8px;
    padding: 0 5px;
    border-radius: 14px;
    background: #cc4440;
    color: #fff;
    font-size: 17px;
    line-height: 28px;
}
.version {
    padding: 40px 0 32px;
    font-size: 20px;
    line-height: 28px;
}

/* routes panel */
.left-panel {
    grid-row: 2 / 4;
    grid-column: 2;
    display: flex;
    flex-direction: column;
    margin-top: 60px;
    border-left: 2px solid #42444f;
    border-right: 8px double #42444f;
}
.panel-head {
    padding-left: 10px;
    line-height: 60px;
    background: #42444f;
    border-bottom: 2px solid #161824;
}
.toolbar {
    display: flex;
    align-items: center;
    height: 64px;
    padding: 0 6px;
    background: #30323e;
}
.toolbar button {
    width: 68px;
    height: 100%;
}
.left-panel .toolbar {
    height: 66px;
    padding-right: 12px;
}
.route-search {
    width: 300px;
    height: 48px;
    margin-left: 16px;
    padding: 0 4px;
    border-bottom: 2px solid #42444f;
}
.route-search::placeholder {
    color: #70727a;
}
.tree-root {
    display: flex;
    align-items: center;
    height: 52px;
    padding-left: 6px;
    gap: 20px;
    background: #4198fc;
    color: #fff;
}
.tree-root .folder {
    width: 36px;
    height: 34px;
    margin-right: -8px;
}
.routes {
    flex: 1;
    padding-left: 79px;
}
.routes li {
    display: flex;
    align-items: center;
    gap: 17px;
    height: 52px;
}
.routes svg {
    width: 26px;
    height: 31px;
}
.left-props {
    display: flex;
    align-items: center;
    justify-content: space-between;
    height: 66px;
    padding: 0 26px 0 8px;
    background: #30323e;
}

/* file tabs */
.tabs {
    grid-column: 3 / 5;
    display: flex;
    padding-top: 2px;
}
.tab {
    width: 250px;
    gap: 22px;
    padding-left: 24px;
    justify-content: flex-start;
    color: inherit;
}
.tab svg {
    width: 38px;
    height: 38px;
}
.tab.active {
    width: 244px;
    color: #fff;
    background: #42444f;
    border-top: 4px solid #4198fc;
}
.tab .close {
    width: 26px;
    height: 26px;
    margin-left: -6px;
    stroke-width: 3px;
}
.tab-more {
    width: 88px;
    border-left: 2px solid #42444f;
}

/* design view */
.editor {
    grid-column: 3;
    grid-row: 3;
    min-width: 0;
    display: flex;
    flex-direction: column;
}
.modes {
    display: flex;
    justify-content: center;
    gap: 28px;
    height: 58px;
    padding-bottom: 4px;
    background: #42444f;
}
.design-bar {
    display: grid;
    grid-template-columns: 1fr auto 1fr;
    padding: 0 8px 0 4px;
}
.group {
    display: flex;
    height: 64px;
}
.group button {
    width: 70px;
}
.end {
    justify-content: flex-end;
}
.sep {
    width: 2px;
    margin: 0 7px;
    background: #42444f;
}
.stage {
    flex: 1;
    display: flex;
}
.side-tools {
    flex: none;
    display: flex;
    flex-direction: column;
    width: 82px;
    padding-top: 16px;
    background: #30323e;
    border-right: 2px solid #42444f;
}
.side-tools button {
    height: 68px;
}
.side-tools hr {
    width: 100%;
    margin: 8px 0;
    border: 0;
    border-top: 2px solid #42444f;
}
.side-tools button:last-child {
    margin-bottom: 16px;
}
.canvas {
    flex: 1;
    min-width: 0;
    display: flex;
    flex-direction: column;
}
.ruler {
    display: flex;
    height: 40px;
    overflow: hidden;
    border-bottom: 2px solid #777886;
    background:
        repeating-linear-gradient(90deg, #777886 0 2px, transparent 2px 100px),
        repeating-linear-gradient(90deg, #777886 0 2px, transparent 2px 20px) bottom / 100% 8px no-repeat,
        repeating-linear-gradient(90deg, #777886 0 2px, transparent 2px 10px) bottom / 100% 4px no-repeat;
}
.ruler span {
    flex: none;
    width: 100px;
    padding-left: 6px;
    font-family: "Liberation Sans", Arial, sans-serif;
    font-size: 20px;
    line-height: 34px;
    color: #8a8b98;
}
.ruler span:last-child {
    width: 80px;
}
.site {
    flex: 1;
    display: flex;
    flex-direction: column;
    background: #fff;
}
.site-header {
    display: flex;
    flex-direction: column;
    align-items: center;
    height: 212px;
    padding-top: 14px;
    background: #f9fafc;
}
.site-logo {
    width: 392px;
    height: 98px;
    margin-left: 16px;
}
.site-nav {
    display: flex;
    gap: 32px;
    margin-top: 22px;
    font-size: 30px;
    line-height: 48px;
    color: #555759;
}
.site-nav svg {
    width: 18px;
    height: 10px;
    margin-left: 7px;
    vertical-align: 6px;
}
.content-page {
    display: flex;
    align-items: center;
    justify-content: center;
    height: 600px;
    background: #ecf1f4;
    border-top: 2px solid #cfd9d4;
    border-bottom: 2px solid #cfd9d4;
    color: #8b97ab;
    font-size: 48px;
}
.site-gap {
    flex: 1;
}
.site-footer {
    display: grid;
    grid-template-columns: repeat(4, 1fr);
    padding: 96px 68px 30px 72px;
    background: #313b48;
    color: #fff;
    font-size: 30px;
    line-height: 48px;
}
.site-footer h3 {
    height: 54px;
    padding-left: 24px;
    border-left: 6px solid #2cadb4;
    font-weight: 600;
    line-height: 42px;
    margin-bottom: 2px;
}
.site-footer h3::first-letter {
    color: #2cadb4;
}
.site-footer li {
    display: flex;
    align-items: center;
    gap: 16px;
    padding-left: 32px;
}
.site-footer li::before {
    content: "";
    width: 14px;
    height: 14px;
    border: 1px solid #fff;
    border-radius: 50%;
}
.site-footer p {
    display: flex;
    align-items: center;
    gap: 10px;
    padding-left: 30px;
}
.site-footer p svg {
    width: 32px;
    height: 32px;
}
.site-copy {
    display: flex;
    justify-content: space-between;
    height: 82px;
    padding: 16px 22px 0 96px;
    background: #2a303a;
    color: #fff;
    font-size: 21px;
    line-height: 33px;
}
.site-copy nav {
    display: flex;
    flex-wrap: wrap;
    justify-content: flex-end;
    column-gap: 47px;
    width: 960px;
}
.grip {
    flex: none;
    display: flex;
    align-items: center;
    justify-content: center;
    width: 32px;
    background: #30323e;
}
.grip i {
    width: 10px;
    height: 34px;
    border-left: 2px solid #5c5e6a;
    border-right: 2px solid #5c5e6a;
}
.status {
    display: flex;
    align-items: center;
    gap: 8px;
    height: 54px;
    padding: 0 18px 0 24px;
    background: #30323e;
}
.status-icon {
    width: 30px;
    height: 30px;
}
.error {
    color: #c54440;
}
.warning {
    color: #f5be68;
}
.zoom {
    width: 30px;
    height: 30px;
    stroke-width: 3px;
}
.below {
    height: 64px;
}

/* app structure panel */
.right-panel {
    grid-column: 4;
    grid-row: 3;
    border-left: 6px double #42444f;
}
.side-tabs {
    display: flex;
    gap: 29px;
    height: 58px;
    padding: 0 32px 4px 22px;
    background: #42444f;
}
.right-panel .toolbar {
    padding-right: 12px;
}
.app-tree {
    height: 580px;
}
.app-root, .app-tree li {
    display: flex;
    align-items: center;
    height: 52px;
}
.app-root {
    padding-left: 6px;
    gap: 12px;
}
.app-root .small {
    margin-right: 4px;
}
.app-tree li {
    gap: 12px;
    padding-left: 28px;
}
.app-tree i, .dim {
    width: 26px;
    margin-right: 8px;
}
.dim {
    color: #85868f;
}
.node {
    width: 36px;
    height: 34px;
}
.node.arrow {
    height: 16px;
}
.app-tree b {
    font-weight: 400;
}
.blue {
    color: #6aadca;
}
.green {
    color: #a3b96c;
}
.right-props {
    padding-left: 8px;
    line-height: 62px;
    background: #30323e;
}

/* bottom bar */
.bottombar {
    grid-column: 2 / -1;
    grid-row: 4;
    display: flex;
    height: 64px;
    background: #30323e;
    border-left: 2px solid #42444f;
}
.bb-group {
    display: flex;
    padding: 0 9px;
    border-right: 2px solid #42444f;
}
.bb-group.last {
    border-right: 0;
}
.bb-group button {
    gap: 10px;
    padding: 0 15px;
}
.bb-group .server-menu {
    padding: 0 18px;
}
.target {
    display: flex;
    align-items: center;
    gap: 10px;
    padding: 0 15px;
}
.target select {
    appearance: none;
}
.drop-caret {
    width: 16px;
    height: 12px;
    color: #9a9ba5;
}

/* taskbar */
.taskbar {
    display: flex;
    align-items: center;
    justify-content: space-between;
    height: 96px;
    border-top: 3px solid #b4b8c4;
    color: #1c1c1c;
    font-size: 23px;
    background: linear-gradient(90deg, #e2eef8 0, #e2eef8 18%, #d6e2fa 24%, #d9dcf1 34%, #d4e3fa 43%, #dadcf0 52%, #d5dff8 62%, #dadcee 73%, #e1edf8 79%, #e1edf8 100%);
}
.weather {
    display: flex;
    align-items: center;
    gap: 4px;
    padding-left: 36px;
    line-height: 32px;
}
.weather svg {
    width: 65px;
    height: 72px;
}
.weather small {
    font-size: 23px;
    color: #5a5d62;
}
.apps {
    flex: 1;
    display: flex;
    justify-content: center;
    align-items: center;
    padding-left: 252px;
}
.apps button {
    position: relative;
    width: 88px;
    height: 80px;
}
.apps svg {
    width: 48px;
    height: 48px;
}
.apps .inset {
    width: 44px;
    height: 40px;
}
.task-search {
    display: flex;
    align-items: center;
    width: 434px;
    height: 60px;
    margin: 0 6px 0 8px;
    padding: 0 8px 0 20px;
    gap: 18px;
    border-radius: 30px;
    background: #f4f7fd;
    box-shadow: 0 2px 2px #b8c2da;
    font-size: 25px;
}
.task-search input {
    flex: 1;
    min-width: 0;
}
.task-search input::placeholder {
    color: #5c5f66;
}
.task-search svg {
    width: 32px;
    height: 32px;
}
.task-search .bing {
    width: 40px;
    height: 40px;
}
.run::after, .current::after {
    content: "";
    position: absolute;
    left: 38px;
    bottom: 2px;
    width: 12px;
    height: 6px;
    border-radius: 3px;
    background: #777c86;
}
.apps .current {
    width: 76px;
    margin: 0 6px;
    border-radius: 8px;
    background: #eff3fb;
    box-shadow: 0 1px 2px #b8c2da;
}
.current::after {
    left: 22px;
    width: 32px;
    background: #0078d7;
}
.badge {
    position: absolute;
    left: 48px;
    top: 0;
    width: 28px;
    height: 28px;
    border-radius: 50%;
    background: #ff0a3c;
    color: #fff;
    line-height: 28px;
    text-align: center;
}
.tray {
    display: flex;
    align-items: center;
    gap: 30px;
    padding-right: 38px;
}
.tray-icon {
    width: 34px;
    height: 34px;
    fill: none;
    stroke: #1c1c1c;
    stroke-width: 2px;
}
.mic {
    stroke: #1450a0;
}
.sound {
    margin-left: -18px;
}
.clock {
    text-align: right;
    line-height: 32px;
}
.bell {
    margin-left: -16px;
}
```
